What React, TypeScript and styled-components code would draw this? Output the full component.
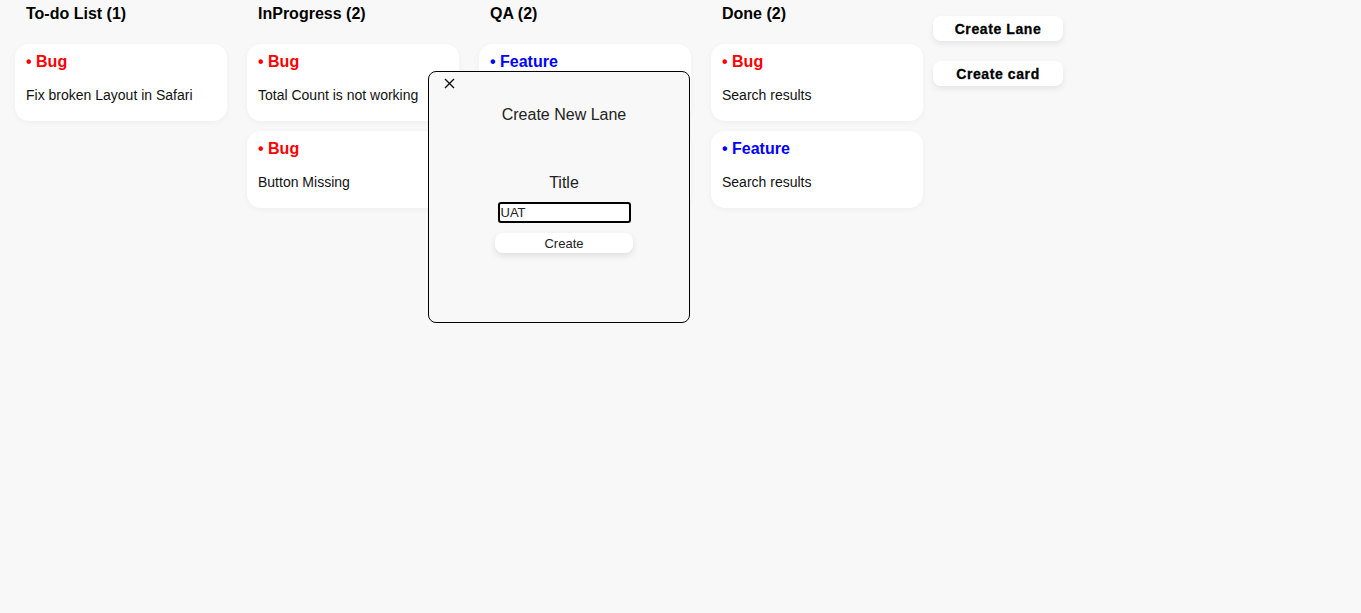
import styled, { createGlobalStyle } from 'styled-components'

const GlobalStyle = createGlobalStyle`
  html, body {
    margin: 0;
    padding: 0;
    background: #f8f8f8;
    font-family: "Liberation Sans", Arial, sans-serif;
  }
`

const Page = styled.div`
  position: relative;
  min-height: 613px;
  background: #f8f8f8;
`

const Board = styled.div`
  display: flex;
  align-items: flex-start;
  padding: 0 15px;
`

const Lanes = styled.div`
  display: flex;
  gap: 20px;
`

const Lane = styled.div`
  width: 212px;
  display: flex;
  flex-direction: column;
`

const LaneTitle = styled.h2`
  margin: 0 0 16px;
  padding-left: 11px;
  font-size: 16px;
  line-height: 28px;
  font-weight: bold;
  color: #000;
`

const Cards = styled.div`
  display: flex;
  flex-direction: column;
  gap: 10px;
`

const Card = styled.div`
  height: 77px;
  box-sizing: border-box;
  background: #fff;
  border-radius: 14px;
  padding: 9px 11px 0;
  box-shadow: 0 2px 6px rgba(0, 0, 0, 0.04);
`

const Tag = styled.div<{ $kind: 'Bug' | 'Feature' }>`
  font-size: 16px;
  line-height: 18px;
  font-weight: bold;
  color: ${({ $kind }) => ($kind === 'Bug' ? '#ff0000' : '#0000ff')};
`

const Desc = styled.p`
  margin: 16px 0 0;
  font-size: 14px;
  line-height: 16px;
  color: #111;
`

const Actions = styled.div`
  display: flex;
  flex-direction: column;
  gap: 20px;
  margin: 16px 0 0 10px;
`

const ActionButton = styled.button`
  width: 130px;
  height: 25px;
  border: none;
  border-radius: 8px;
  background: #fff;
  box-shadow: 0 3px 6px rgba(0, 0, 0, 0.08);
  font-family: "Liberation Sans", Arial, sans-serif;
  font-size: 14px;
  font-weight: 900;
  letter-spacing: 0.6px;
  color: #000;
  -webkit-text-stroke: 0.3px #000;
  cursor: pointer;
`

const Modal = styled.div`
  position: absolute;
  left: 428px;
  top: 71px;
  width: 262px;
  height: 252px;
  box-sizing: border-box;
  border: 1px solid #000;
  border-radius: 8px;
  padding-left: 10px;
  background: #f8f8f8;
  display: flex;
  flex-direction: column;
  align-items: center;
`

const Close = styled.button`
  position: absolute;
  left: 12px;
  top: 3px;
  border: none;
  background: none;
  padding: 0;
  width: 16px;
  height: 16px;
  display: flex;
  align-items: center;
  justify-content: center;
  cursor: pointer;
`

const ModalTitle = styled.h3`
  margin: 33px 0 0;
  font-size: 16px;
  line-height: 20px;
  font-weight: normal;
  color: #222;
`

const FieldLabel = styled.label`
  margin-top: 48px;
  font-size: 16px;
  line-height: 20px;
  color: #222;
`

const TitleInput = styled.input`
  margin-top: 9px;
  width: 133px;
  height: 21px;
  box-sizing: border-box;
  border: 2px solid #000;
  border-radius: 3px;
  padding: 0 1px;
  background: #fff;
  font-family: "Liberation Sans", Arial, sans-serif;
  font-size: 13px;
  color: #222;
  outline: none;
`

const SubmitButton = styled.button`
  margin-top: 10px;
  width: 138px;
  height: 20px;
  border: none;
  border-radius: 8px;
  background: #fff;
  box-shadow: 0 3px 6px rgba(0, 0, 0, 0.1);
  font-family: "Liberation Sans", Arial, sans-serif;
  font-size: 13px;
  color: #222;
  cursor: pointer;
`

type Item = { kind: 'Bug' | 'Feature'; text: string }

const lanes: { title: string; cards: Item[] }[] = [
  { title: 'To-do List', cards: [{ kind: 'Bug', text: 'Fix broken Layout in Safari' }] },
  {
    title: 'InProgress',
    cards: [
      { kind: 'Bug', text: 'Total Count is not working' },
      { kind: 'Bug', text: 'Button Missing' },
    ],
  },
  {
    title: 'QA',
    cards: [
      { kind: 'Feature', text: 'Search results' },
      { kind: 'Bug', text: 'Search results' },
    ],
  },
  {
    title: 'Done',
    cards: [
      { kind: 'Bug', text: 'Search results' },
      { kind: 'Feature', text: 'Search results' },
    ],
  },
]

export default function App() {
  return (
    <Page>
      <GlobalStyle />
      <Board>
        <Lanes>
          {lanes.map((lane) => (
            <Lane key={lane.title}>
              <LaneTitle>
                {lane.title} ({lane.cards.length})
              </LaneTitle>
              <Cards>
                {lane.cards.map((c, i) => (
                  <Card key={i}>
                    <Tag $kind={c.kind}>• {c.kind}</Tag>
                    <Desc>{c.text}</Desc>
                  </Card>
                ))}
              </Cards>
            </Lane>
          ))}
        </Lanes>
        <Actions>
          <ActionButton>Create Lane</ActionButton>
          <ActionButton>Create card</ActionButton>
        </Actions>
      </Board>

      <Modal>
        <Close aria-label="close">
          <svg width="11" height="11" viewBox="0 0 11 11">
            <path d="M1 1 L10 10 M10 1 L1 10" stroke="#111" strokeWidth="1.4" />
          </svg>
        </Close>
        <ModalTitle>Create New Lane</ModalTitle>
        <FieldLabel htmlFor="lane-title">Title</FieldLabel>
        <TitleInput id="lane-title" defaultValue="UAT" />
        <SubmitButton>Create</SubmitButton>
      </Modal>
    </Page>
  )
}
